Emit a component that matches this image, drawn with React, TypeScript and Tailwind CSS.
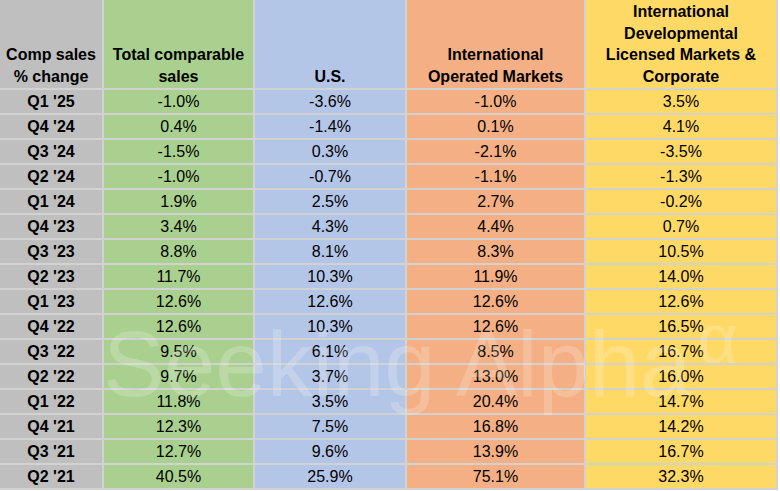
const rows: [string, string, string, string, string][] = [
  ["Q1 '25", "-1.0%", "-3.6%", "-1.0%", "3.5%"],
  ["Q4 '24", "0.4%", "-1.4%", "0.1%", "4.1%"],
  ["Q3 '24", "-1.5%", "0.3%", "-2.1%", "-3.5%"],
  ["Q2 '24", "-1.0%", "-0.7%", "-1.1%", "-1.3%"],
  ["Q1 '24", "1.9%", "2.5%", "2.7%", "-0.2%"],
  ["Q4 '23", "3.4%", "4.3%", "4.4%", "0.7%"],
  ["Q3 '23", "8.8%", "8.1%", "8.3%", "10.5%"],
  ["Q2 '23", "11.7%", "10.3%", "11.9%", "14.0%"],
  ["Q1 '23", "12.6%", "12.6%", "12.6%", "12.6%"],
  ["Q4 '22", "12.6%", "10.3%", "12.6%", "16.5%"],
  ["Q3 '22", "9.5%", "6.1%", "8.5%", "16.7%"],
  ["Q2 '22", "9.7%", "3.7%", "13.0%", "16.0%"],
  ["Q1 '22", "11.8%", "3.5%", "20.4%", "14.7%"],
  ["Q4 '21", "12.3%", "7.5%", "16.8%", "14.2%"],
  ["Q3 '21", "12.7%", "9.6%", "13.9%", "16.7%"],
  ["Q2 '21", "40.5%", "25.9%", "75.1%", "32.3%"],
];

const bgs = ["bg-[#bfbfbf]", "bg-[#a9d08e]", "bg-[#b4c6e7]", "bg-[#f4b084]", "bg-[#ffd966]"];

function Head({ bg, children }: { bg: string; children: React.ReactNode }) {
  return (
    <div className={`${bg} h-[88px] flex flex-col justify-end items-center text-center font-bold text-[16px] leading-[21.5px] pb-[1px]`}>
      {children}
    </div>
  );
}

export default function App() {
  return (
    <div className="relative w-[780px] h-[491px] bg-white overflow-hidden text-black font-['Liberation_Sans',Arial,sans-serif]">
      <div className="grid grid-cols-[102px_149px_150px_177px_190px] gap-[2px] bg-[#d2d2d2] pr-[2px] pb-[2px] w-fit">
        <Head bg={bgs[0]}>
          <p>Comp sales</p>
          <p>% change</p>
        </Head>
        <Head bg={bgs[1]}>
          <p>Total comparable</p>
          <p>sales</p>
        </Head>
        <Head bg={bgs[2]}>
          <p>U.S.</p>
        </Head>
        <Head bg={bgs[3]}>
          <p>International</p>
          <p>Operated Markets</p>
        </Head>
        <Head bg={bgs[4]}>
          <p>International</p>
          <p>Developmental</p>
          <p>Licensed Markets &amp;</p>
          <p>Corporate</p>
        </Head>
        {rows.map((r) =>
          r.map((v, i) => (
            <div
              key={r[0] + i}
              className={`${bgs[i]} h-[23px] flex items-center justify-center text-[16px] leading-none ${i === 0 ? "font-bold" : ""}`}
            >
              {v}
            </div>
          ))
        )}
      </div>
      {/* watermark */}
      <div className="absolute left-[103px] top-[318px] flex items-start text-white/20 text-[92px] leading-none pointer-events-none select-none whitespace-nowrap">
        <span>Seeking Alpha</span>
        <span className="text-[70px] ml-[6px] -mt-[14px]">α</span>
      </div>
    </div>
  );
}
